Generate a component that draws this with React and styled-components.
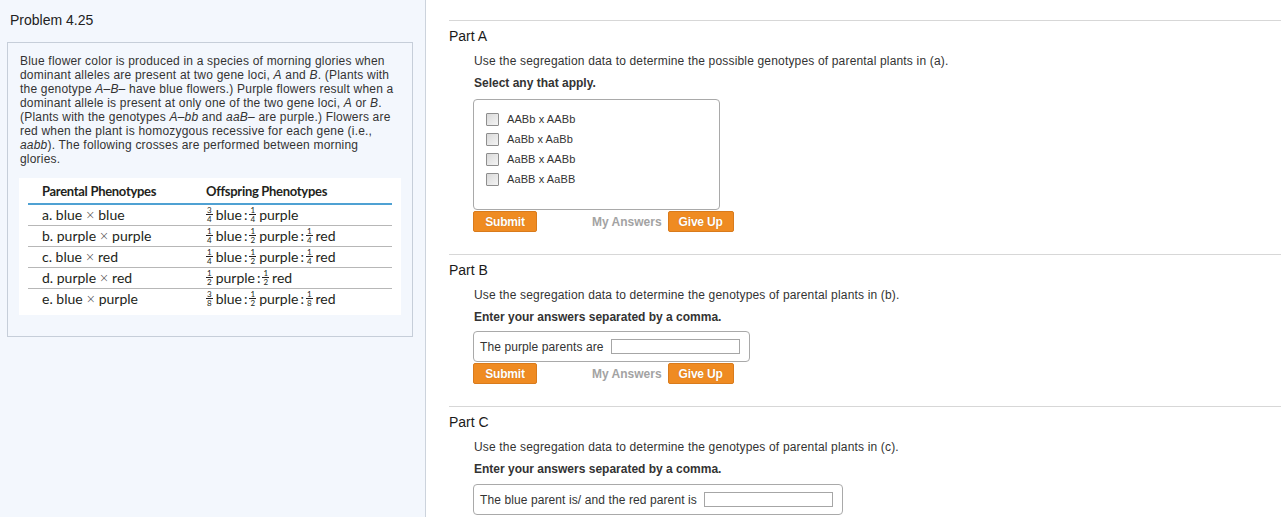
import React from "react";
import styled, { createGlobalStyle } from "styled-components";

const GlobalStyle = createGlobalStyle`
  html, body {
    margin: 0;
    padding: 0;
    background: #fff;
  }
  body {
    font-family: "Liberation Sans", Arial, sans-serif;
    color: #333;
  }
`;

const Page = styled.div`
  display: flex;
  height: 517px;
  overflow: hidden;
`;

const Sidebar = styled.aside`
  width: 426px;
  flex-shrink: 0;
  background: #f3f7fd;
  border-right: 1px solid #ccd3dc;
  padding: 12px 0 0 7px;
  box-sizing: border-box;
`;

const ProblemTitle = styled.h1`
  margin: 0 0 14px 3px;
  font-size: 14px;
  line-height: 16px;
  font-weight: normal;
  color: #222;
`;

const ProblemBox = styled.div`
  width: 406px;
  box-sizing: border-box;
  border: 1px solid #c6ced9;
  padding: 11px 0 21px 11px;
`;

const ProblemText = styled.p`
  margin: 0 0 12px 1px;
  width: 374px;
  font-size: 12px;
  line-height: 14px;
  letter-spacing: 0.2px;
  color: #333;
`;

const DataTable = styled.div`
  width: 382px;
  background: #fff;
  padding: 0 9px 6px;
  box-sizing: border-box;
  font-family: Lato, "Open Sans", sans-serif;
  color: #231f20;
`;

const TableRow = styled.div`
  display: grid;
  grid-template-columns: 164px 1fr;
  height: ${(p) => (p.$head ? "21px" : "20px")};
  align-items: ${(p) => (p.$head ? "end" : "center")};
  padding-bottom: ${(p) => (p.$head ? "4px" : "0")};
  border-bottom: ${(p) =>
    p.$head ? "2px solid #4fa1d3" : p.$last ? "none" : "1px solid #b7b7b7"};
  font-size: ${(p) => (p.$head ? "13px" : "14px")};
  font-weight: ${(p) => (p.$head ? 700 : 400)};
  letter-spacing: ${(p) => (p.$head ? "-0.3px" : "0")};
  box-sizing: content-box;
`;

const Cell = styled.div`
  padding-left: 14px;
  white-space: nowrap;
  display: flex;
  align-items: center;
  line-height: 16px;
`;

const Times = styled.span`
  margin: 0 3px;
  font-family: "DejaVu Sans", sans-serif;
  font-size: 12px;
  font-weight: 300;
  color: #444;
`;

const Frac = styled.span`
  display: inline-flex;
  flex-direction: column;
  align-items: center;
  font-size: 8px;
  line-height: 7px;
  margin-right: 3px;
  & > span:first-child {
    border-bottom: 1px solid #231f20;
    padding: 0 1px 0;
  }
  & > span:last-child {
    padding-top: 1px;
  }
`;

const Colon = styled.span`
  margin: 0 2px 0 2px;
`;

const Main = styled.main`
  flex: 1;
  padding: 20px 2px 0 23px;
  box-sizing: border-box;
`;

const Section = styled.section`
  border-top: 1px solid #d7d7d7;
  padding-bottom: 22px;
`;

const PartTitle = styled.h2`
  margin: 7px 0 0;
  font-size: 14px;
  line-height: 16px;
  font-weight: normal;
  color: #1a1a1a;
`;

const Body = styled.div`
  padding-left: 24px;
`;

const Instruction = styled.p`
  margin: 10px 0 0 1px;
  font-size: 12px;
  line-height: 14px;
  letter-spacing: 0.17px;
  color: #333;
`;

const Hint = styled.p`
  margin: 8px 0 0 1px;
  font-size: 12px;
  line-height: 14px;
  font-weight: bold;
  color: #333;
`;

const AnswerBox = styled.div`
  margin-top: ${(p) => (p.$gap ? p.$gap : "9px")};
  border: 1px solid #a9a9a9;
  border-radius: 4px;
  box-sizing: border-box;
  background: #fff;
`;

const ChoiceBox = styled(AnswerBox)`
  width: 247px;
  height: 111px;
  padding: 9px 0 0 12px;
`;

const Choice = styled.label`
  display: flex;
  align-items: center;
  height: 20px;
  font-size: 11px;
  letter-spacing: 0.1px;
  color: #333;
`;

const Check = styled.input`
  appearance: none;
  width: 13px;
  height: 13px;
  margin: 0 8px 0 0;
  border: 1px solid #8e8e8e;
  border-radius: 1px;
  background: linear-gradient(135deg, #d9d9d9 0%, #f4f4f4 100%);
  box-sizing: border-box;
`;

const FieldBox = styled(AnswerBox)`
  display: inline-flex;
  align-items: center;
  height: 31px;
  padding: 0 9px 0 6px;
  gap: 7px;
  font-size: 12px;
  letter-spacing: 0.1px;
  color: #333;
`;

const TextField = styled.input`
  width: 129px;
  height: 15px;
  border: 1px solid #a6a6a6;
  padding: 0 3px;
  box-sizing: border-box;
  font: inherit;
`;

const Actions = styled.div`
  display: flex;
  align-items: center;
  margin-top: 1px;
`;

const OrangeButton = styled.button`
  height: 21px;
  width: ${(p) => p.$w}px;
  padding: 0;
  background: #ef8b22;
  border: 1px solid #d97b1c;
  border-radius: 2px;
  color: #fff;
  font-family: "Liberation Sans", Arial, sans-serif;
  font-size: 12px;
  font-weight: bold;
  letter-spacing: -0.2px;
  text-shadow: 0 0 1px rgba(160, 80, 0, 0.5);
  cursor: pointer;
`;

const MyAnswers = styled.span`
  margin: 0 6px 0 55px;
  font-size: 12px;
  font-weight: bold;
  color: #a3a3a3;
`;

const Buttons = () => (
  <Actions>
    <OrangeButton $w={64}>Submit</OrangeButton>
    <MyAnswers>My Answers</MyAnswers>
    <OrangeButton $w={66}>Give Up</OrangeButton>
  </Actions>
);

const F = ({ n, d }) => (
  <Frac>
    <span>{n}</span>
    <span>{d}</span>
  </Frac>
);

const rows = [
  ["a.", "blue", "blue", [[3, 4, "blue"], [1, 4, "purple"]]],
  ["b.", "purple", "purple", [[1, 4, "blue"], [1, 2, "purple"], [1, 4, "red"]]],
  ["c.", "blue", "red", [[1, 4, "blue"], [1, 2, "purple"], [1, 4, "red"]]],
  ["d.", "purple", "red", [[1, 2, "purple"], [1, 2, "red"]]],
  ["e.", "blue", "purple", [[3, 8, "blue"], [1, 2, "purple"], [1, 8, "red"]]],
];

const choices = ["AABb x AABb", "AaBb x AaBb", "AaBB x AABb", "AaBB x AaBB"];

export default function App() {
  return (
    <Page>
      <GlobalStyle />
      <Sidebar>
        <ProblemTitle>Problem 4.25</ProblemTitle>
        <ProblemBox>
          <ProblemText>
            Blue flower color is produced in a species of morning glories when
            dominant alleles are present at two gene loci, <i>A</i> and{" "}
            <i>B</i>. (Plants with the genotype <i>A–B–</i> have blue
            flowers.) Purple flowers result when a dominant allele is present
            at only one of the two gene loci, <i>A</i> or <i>B</i>. (Plants
            with the genotypes <i>A–bb</i> and <i>aaB–</i> are purple.)
            Flowers are red when the plant is homozygous recessive for each
            gene (i.e., <i>aabb</i>). The following crosses are performed
            between morning glories.
          </ProblemText>
          <DataTable>
            <TableRow $head>
              <Cell>Parental Phenotypes</Cell>
              <Cell>Offspring Phenotypes</Cell>
            </TableRow>
            {rows.map(([letter, p1, p2, parts], i) => (
              <TableRow key={letter} $last={i === rows.length - 1}>
                <Cell>
                  {letter}&nbsp;{p1}
                  <Times>×</Times>
                  {p2}
                </Cell>
                <Cell>
                  {parts.map(([n, d, c], j) => (
                    <React.Fragment key={j}>
                      {j > 0 && <Colon>:</Colon>}
                      <F n={n} d={d} />
                      {c}
                    </React.Fragment>
                  ))}
                </Cell>
              </TableRow>
            ))}
          </DataTable>
        </ProblemBox>
      </Sidebar>

      <Main>
        <Section>
          <PartTitle>Part A</PartTitle>
          <Body>
            <Instruction>
              Use the segregation data to determine the possible genotypes of
              parental plants in (a).
            </Instruction>
            <Hint>Select any that apply.</Hint>
            <ChoiceBox>
              {choices.map((c) => (
                <Choice key={c}>
                  <Check type="checkbox" />
                  {c}
                </Choice>
              ))}
            </ChoiceBox>
            <Buttons />
          </Body>
        </Section>

        <Section>
          <PartTitle>Part B</PartTitle>
          <Body>
            <Instruction>
              Use the segregation data to determine the genotypes of parental
              plants in (b).
            </Instruction>
            <Hint>Enter your answers separated by a comma.</Hint>
            <div>
              <FieldBox $gap="7px">
                The purple parents are
                <TextField type="text" />
              </FieldBox>
            </div>
            <Buttons />
          </Body>
        </Section>

        <Section>
          <PartTitle>Part C</PartTitle>
          <Body>
            <Instruction>
              Use the segregation data to determine the genotypes of parental
              plants in (c).
            </Instruction>
            <Hint>Enter your answers separated by a comma.</Hint>
            <div>
              <FieldBox $gap="8px">
                The blue parent is/ and the red parent is
                <TextField type="text" />
              </FieldBox>
            </div>
          </Body>
        </Section>
      </Main>
    </Page>
  );
}
